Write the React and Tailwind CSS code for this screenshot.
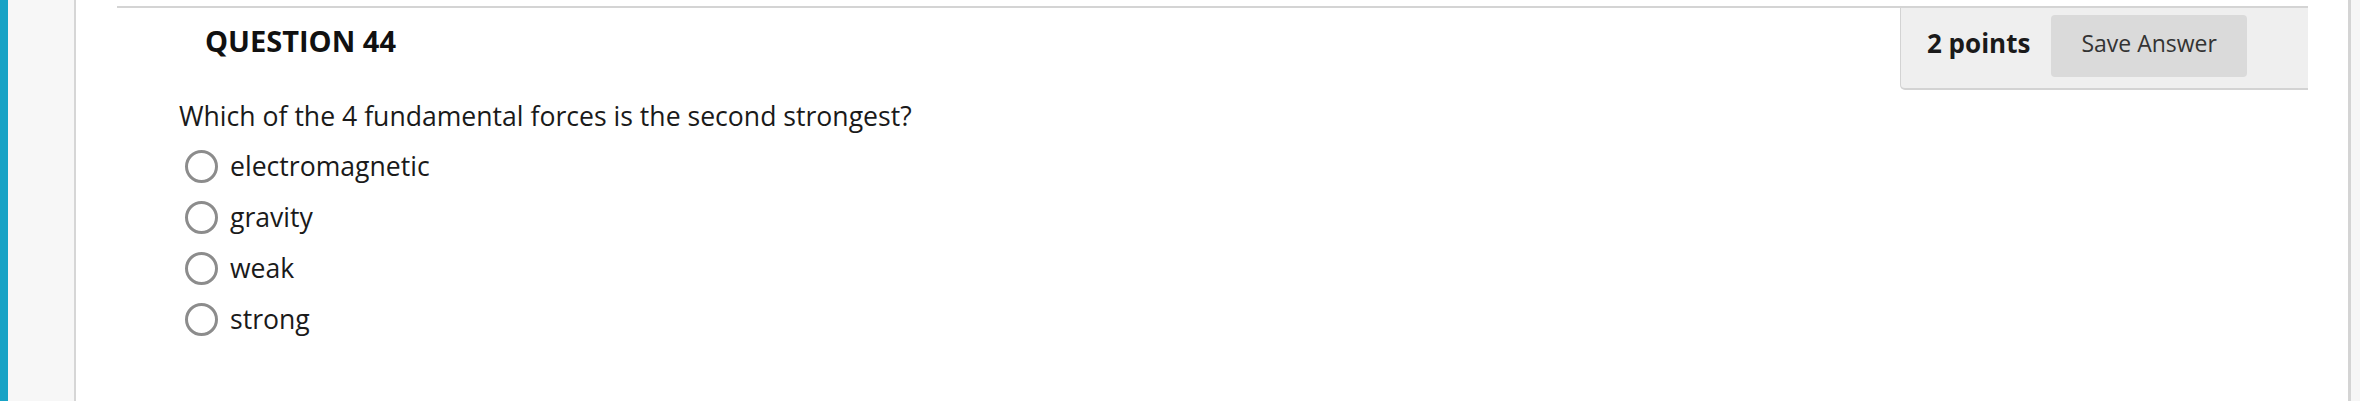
const options = ["electromagnetic", "gravity", "weak", "strong"];

const Radio = () => (
    <span className="w-[33px] h-[33px] rounded-full border-[3px] border-[#8c8c8c] bg-white shrink-0"></span>
);

const App = () => {
    return (
        <div className="flex w-[2360px] h-[401px] bg-white overflow-hidden" style={{ fontFamily: '"Open Sans", "Noto Sans", sans-serif' }}>
            <div className="w-[8px] shrink-0 bg-[#17a3c6]"></div>
            <div className="w-[68px] shrink-0 bg-[#f7f7f7] border-r-2 border-[#d6d6d6]"></div>

            <div className="flex-1 pl-[41px] pr-[40px] pt-[6px]">
                <div className="border-t-[2px] border-[#d4d4d4]">
                    <div className="flex justify-between items-start">
                        <h2 className="pl-[88px] pt-[12px] text-[29px] leading-[42px] font-bold text-[#111]">QUESTION 44</h2>
                        <div className="w-[408px] h-[82px] bg-[#efefef] border-l border-b-2 border-[#d3d3d3] rounded-bl-[5px] pl-[26px] pt-[7px]">
                            <div className="flex items-center h-[62px]">
                                <span className="pb-[6px] text-[26px] font-bold text-[#1a1a1a]">2 points</span>
                                <button className="ml-[21px] h-[62px] px-[30px] pb-[5px] bg-[#dadada] rounded-[4px] text-[23px] text-[#333]">
                                    Save Answer
                                </button>
                            </div>
                        </div>
                    </div>

                    <div className="pl-[62px] mt-[6px]">
                        <p className="text-[26.6px] leading-[40px] text-[#1a1a1a]">Which of the 4 fundamental forces is the second strongest?</p>
                        <div className="mt-[5px]">
                            {options.map((o) => (
                                <label key={o} className="flex items-center h-[51px] pl-[6px] gap-[12px]">
                                    <Radio />
                                    <span className="text-[26.6px] text-[#1a1a1a]">{o}</span>
                                </label>
                            ))}
                        </div>
                    </div>
                </div>
            </div>

            <div className="w-[3px] shrink-0 bg-[#d4d4d4]"></div>
            <div className="w-[9px] shrink-0 bg-[#f6f6f6]"></div>
        </div>
    );
};

export default App;
